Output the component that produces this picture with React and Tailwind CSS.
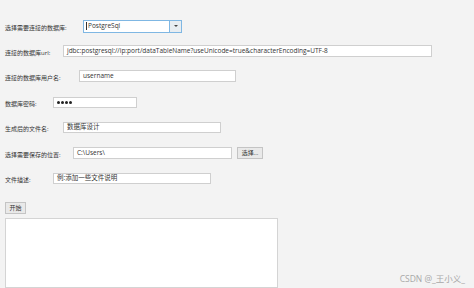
import React from "react";

const font = { fontFamily: '"Open Sans", "Noto Sans CJK SC", sans-serif' };

function Field({ label, labelW, inputW, h, mt, value, children }) {
  return (
    <div className="flex items-center" style={{ marginTop: mt, height: h }}>
      <span
        className="shrink-0 text-[6px] leading-none text-[#333] pt-[3px]"
        style={{ width: labelW }}
      >
        {label}
      </span>
      <div
        className="h-full border border-[#cfcfcf] bg-white flex items-center pl-[3px] text-[6.5px] leading-none text-[#333] overflow-hidden whitespace-nowrap"
        style={{ width: inputW }}
      >
        {value}
      </div>
      {children}
    </div>
  );
}

export default function App() {
  return (
    <div
      className="relative w-[474px] h-[288px] overflow-hidden bg-[#f3f3f3] pl-[5px] pt-[20px] flex flex-col"
      style={font}
    >
      {/* database select */}
      <div className="flex items-center h-[14px]">
        <span className="shrink-0 w-[78px] text-[6px] leading-none text-[#333] pt-[3px]">
          选择需要连接的数据库:
        </span>
        <div className="w-[99px] h-full flex border border-[#7fb7e3] bg-white">
          <div className="flex-1 flex items-center pl-[2px] text-[6.5px] leading-none text-[#333]">
            <span className="border-l border-[#333] h-[8px] mr-[1px]" />
            PostgreSql
          </div>
          <div className="w-[12px] h-full border-l border-[#7fb7e3] bg-[#e8edf1] flex items-center justify-center">
            <span className="w-0 h-0 border-l-[2px] border-r-[2px] border-t-[2px] border-l-transparent border-r-transparent border-t-[#444]" />
          </div>
        </div>
      </div>

      <Field
        label="连接的数据库url:"
        labelW={58}
        inputW={369}
        h={14}
        mt={12}
        value="jdbc:postgresql://ip:port/dataTableName?useUnicode=true&characterEncoding=UTF-8"
      />
      <Field label="连接的数据库用户名:" labelW={74} inputW={157} h={13} mt={13} value="username" />
      <Field
        label="数据库密码:"
        labelW={48}
        inputW={84}
        h={12}
        mt={15}
        value={
          <span className="flex gap-[1px]">
            <span className="w-[3px] h-[3px] rounded-full bg-[#222]" />
            <span className="w-[3px] h-[3px] rounded-full bg-[#222]" />
            <span className="w-[3px] h-[3px] rounded-full bg-[#222]" />
            <span className="w-[3px] h-[3px] rounded-full bg-[#222]" />
          </span>
        }
      />
      <Field label="生成后的文件名:" labelW={58} inputW={158} h={12} mt={14} value="数据库设计" />
      <Field label="选择需要保存的位置:" labelW={68} inputW={159} h={12} mt={14} value="C:\Users\">
        <button className="ml-[5px] w-[26px] h-[12px] border border-[#c4c4c4] bg-[#e9e9e9] text-[6px] leading-none text-[#333] flex items-center justify-center">
          选择...
        </button>
      </Field>
      <Field label="文件描述:" labelW={48} inputW={158} h={12} mt={14} value="例:添加一些文件说明" />

      <button className="mt-[18px] w-[21px] h-[13px] border border-[#c4c4c4] bg-[#e9e9e9] text-[6px] leading-none text-[#333] flex items-center justify-center">
        开始
      </button>

      <div className="mt-[4px] w-[273px] h-[70px] shrink-0 border border-[#d4d4d4] bg-white" />

      <span className="absolute right-[9px] bottom-[5px] text-[8.5px] leading-none text-[#a8a8a8]">
        CSDN @_王小义_
      </span>
    </div>
  );
}
